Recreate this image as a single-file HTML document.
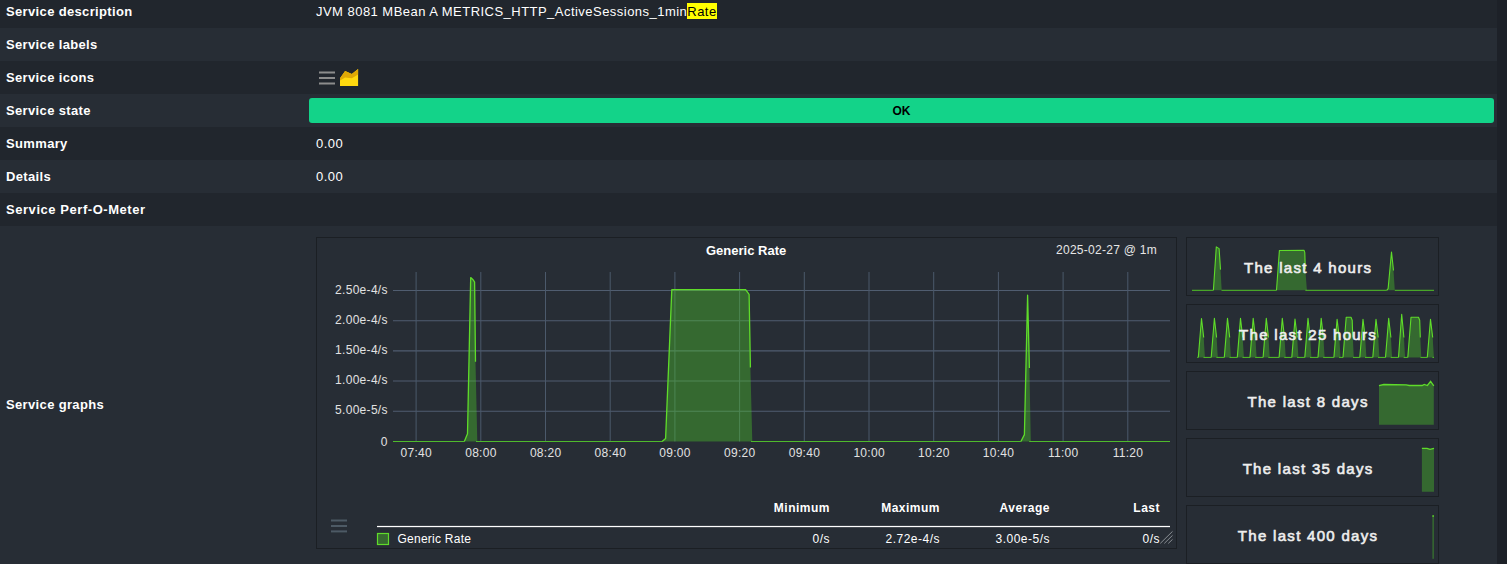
<!DOCTYPE html>
<html><head><meta charset="utf-8">
<style>
html,body{margin:0;padding:0;}
body{width:1507px;height:564px;overflow:hidden;background:#21262d;font-family:"Liberation Sans",sans-serif;color:#fff;position:relative;}
.row{position:absolute;left:0;width:1497px;height:33px;}
.d{background:#21262d;}
.l{background:#272d35;}
.k{position:absolute;left:6px;top:9px;font-weight:bold;font-size:13px;line-height:15px;letter-spacing:0.35px;white-space:nowrap;}
.v{position:absolute;left:316px;top:9px;font-size:13px;line-height:15px;letter-spacing:0.47px;white-space:nowrap;}
.sb{position:absolute;left:1497px;top:0;width:10px;height:564px;background:#1d2128;}
.box{position:absolute;border:1px solid #1b1f24;box-sizing:border-box;}
.t{position:absolute;white-space:nowrap;}
svg text{font-family:"Liberation Sans",sans-serif;}
.ax{font-size:12px;fill:#e2e2e2;letter-spacing:0.3px;}
.sg{position:absolute;font-size:15px;line-height:18px;letter-spacing:1.3px;-webkit-text-stroke:0.6px #eeeeee;color:#eeeeee;white-space:nowrap;transform:translateX(-50%);}
.lh{position:absolute;font-weight:bold;font-size:12px;line-height:14px;letter-spacing:0.5px;white-space:nowrap;text-align:right;}
.lv{position:absolute;font-size:12px;line-height:14px;letter-spacing:0.5px;white-space:nowrap;text-align:right;}
</style></head><body>
<div class="row d" style="top:-5px"><span class="k">Service description</span><span class="v">JVM 8081 MBean A METRICS_HTTP_ActiveSessions_1min<span style="background:#ffff00;color:#000;padding:1px 0 0 0">Rate</span></span></div>
<div class="row l" style="top:28px"><span class="k">Service labels</span></div>
<div class="row d" style="top:61px"><span class="k">Service icons</span>
 <svg style="position:absolute;left:0;top:-61px" width="400" height="100">
  <rect x="319" y="71.5" width="16" height="2" fill="#8c8c8c"/>
  <rect x="319" y="77" width="16" height="2" fill="#8c8c8c"/>
  <rect x="319" y="82.5" width="16" height="2" fill="#8c8c8c"/>
  <polygon points="340,78.2 345.1,71 351.8,73.9 358.1,68.9 358.1,86 340,86" fill="#ffd90f"/>
  <polygon points="340,78.2 345.1,71 351.8,73.9 358.1,68.9 358.1,74.4 351.8,78.2 345.1,77.6 340,80.6" fill="#dfa806"/>
 </svg></div>
<div class="row l" style="top:94px"><span class="k">Service state</span>
 <div style="position:absolute;left:309px;top:4px;width:1185px;height:25px;background:#13d389;border-radius:3px;color:#000;font-weight:bold;font-size:12px;line-height:27px;text-align:center;">OK</div></div>
<div class="row d" style="top:127px"><span class="k">Summary</span><span class="v">0.00</span></div>
<div class="row l" style="top:160px"><span class="k">Details</span><span class="v">0.00</span></div>
<div class="row d" style="top:193px"><span class="k" style="letter-spacing:0.55px">Service Perf-O-Meter</span></div>
<div class="row l" style="top:226px;height:338px"><span class="k" style="top:171px">Service graphs</span></div>
<div class="sb"></div>
<div class="box" style="left:316px;top:237px;width:861px;height:312px"></div>
<div class="box" style="left:1186px;top:237px;width:253px;height:59px"></div>
<div class="box" style="left:1186px;top:304px;width:253px;height:59px"></div>
<div class="box" style="left:1186px;top:371px;width:253px;height:59px"></div>
<div class="box" style="left:1186px;top:438px;width:253px;height:59px"></div>
<div class="box" style="left:1186px;top:505px;width:253px;height:59px"></div>
<svg style="position:absolute;left:0;top:0" width="1507" height="564">
<line x1="393" y1="290.5" x2="1170" y2="290.5" stroke="#505d70" stroke-width="1.15"/>
<line x1="393" y1="320.7" x2="1170" y2="320.7" stroke="#505d70" stroke-width="1.15"/>
<line x1="393" y1="350.8" x2="1170" y2="350.8" stroke="#505d70" stroke-width="1.15"/>
<line x1="393" y1="381.0" x2="1170" y2="381.0" stroke="#505d70" stroke-width="1.15"/>
<line x1="393" y1="411.2" x2="1170" y2="411.2" stroke="#505d70" stroke-width="1.15"/>
<line x1="416.1" y1="272" x2="416.1" y2="441.5" stroke="#4b596b" stroke-width="1"/>
<line x1="480.8" y1="272" x2="480.8" y2="441.5" stroke="#4b596b" stroke-width="1"/>
<line x1="545.5" y1="272" x2="545.5" y2="441.5" stroke="#4b596b" stroke-width="1"/>
<line x1="610.2" y1="272" x2="610.2" y2="441.5" stroke="#4b596b" stroke-width="1"/>
<line x1="674.9" y1="272" x2="674.9" y2="441.5" stroke="#4b596b" stroke-width="1"/>
<line x1="739.6" y1="272" x2="739.6" y2="441.5" stroke="#4b596b" stroke-width="1"/>
<line x1="804.3" y1="272" x2="804.3" y2="441.5" stroke="#4b596b" stroke-width="1"/>
<line x1="869.0" y1="272" x2="869.0" y2="441.5" stroke="#4b596b" stroke-width="1"/>
<line x1="933.7" y1="272" x2="933.7" y2="441.5" stroke="#4b596b" stroke-width="1"/>
<line x1="998.4" y1="272" x2="998.4" y2="441.5" stroke="#4b596b" stroke-width="1"/>
<line x1="1063.1" y1="272" x2="1063.1" y2="441.5" stroke="#4b596b" stroke-width="1"/>
<line x1="1127.8" y1="272" x2="1127.8" y2="441.5" stroke="#4b596b" stroke-width="1"/>
<text x="387.5" y="293.7" text-anchor="end" class="ax" dx="0.3">2.50e-4/s</text>
<text x="387.5" y="323.9" text-anchor="end" class="ax" dx="0.3">2.00e-4/s</text>
<text x="387.5" y="354.0" text-anchor="end" class="ax" dx="0.3">1.50e-4/s</text>
<text x="387.5" y="384.2" text-anchor="end" class="ax" dx="0.3">1.00e-4/s</text>
<text x="387.5" y="414.4" text-anchor="end" class="ax" dx="0.3">5.00e-5/s</text>
<text x="387.5" y="445.9" text-anchor="end" class="ax" dx="0.3">0</text>
<text x="416.1" y="456.8" text-anchor="middle" class="ax" dx="0.15">07:40</text>
<text x="480.8" y="456.8" text-anchor="middle" class="ax" dx="0.15">08:00</text>
<text x="545.5" y="456.8" text-anchor="middle" class="ax" dx="0.15">08:20</text>
<text x="610.2" y="456.8" text-anchor="middle" class="ax" dx="0.15">08:40</text>
<text x="674.9" y="456.8" text-anchor="middle" class="ax" dx="0.15">09:00</text>
<text x="739.6" y="456.8" text-anchor="middle" class="ax" dx="0.15">09:20</text>
<text x="804.3" y="456.8" text-anchor="middle" class="ax" dx="0.15">09:40</text>
<text x="869.0" y="456.8" text-anchor="middle" class="ax" dx="0.15">10:00</text>
<text x="933.7" y="456.8" text-anchor="middle" class="ax" dx="0.15">10:20</text>
<text x="998.4" y="456.8" text-anchor="middle" class="ax" dx="0.15">10:40</text>
<text x="1063.1" y="456.8" text-anchor="middle" class="ax" dx="0.15">11:00</text>
<text x="1127.8" y="456.8" text-anchor="middle" class="ax" dx="0.15">11:20</text>
<line x1="393" y1="441.5" x2="464.3" y2="441.5" stroke="#4fba2c" stroke-width="1.1"/>
<line x1="476" y1="441.5" x2="662.1" y2="441.5" stroke="#4fba2c" stroke-width="1.1"/>
<line x1="751" y1="441.5" x2="1020.9" y2="441.5" stroke="#4fba2c" stroke-width="1.1"/>
<line x1="1029.2" y1="441.5" x2="1170" y2="441.5" stroke="#4fba2c" stroke-width="1.1"/>
<polygon points="464.3,441.5 467.5,433.8 470.7,277.6 473.3,280.0 474.6,282.2 475.5,361.7 477.3,441.5" fill="rgba(80,210,40,0.37)"/>
<polyline points="464.3,441.5 467.5,433.8 470.7,277.6 473.3,280.0 474.6,282.2 475.5,361.7" fill="none" stroke="#5fdc2a" stroke-width="1.3" stroke-linejoin="round"/>
<polygon points="662.1,441.5 665.6,438.4 671.8,289.6 745.6,289.6 749.1,294.4 750.4,367.6 752.3,441.5" fill="rgba(80,210,40,0.37)"/>
<polyline points="662.1,441.5 665.6,438.4 671.8,289.6 745.6,289.6 749.1,294.4 750.4,367.6" fill="none" stroke="#5fdc2a" stroke-width="1.3" stroke-linejoin="round"/>
<polygon points="1020.9,441.5 1024.4,434.6 1027.6,295.2 1029.4,368.0 1030.8,441.5" fill="rgba(80,210,40,0.37)"/>
<polyline points="1020.9,441.5 1024.4,434.6 1027.6,295.2 1029.4,368.0" fill="none" stroke="#5fdc2a" stroke-width="1.3" stroke-linejoin="round"/>
<rect x="377" y="525.9" width="793" height="1.25" fill="#ffffff"/>
<rect x="377.5" y="533.5" width="11" height="11" fill="#376a30" stroke="#5fdc2a" stroke-width="1.2"/>
<rect x="331" y="519.5" width="16" height="2" fill="#4d5a65"/>
<rect x="331" y="525" width="16" height="2" fill="#4d5a65"/>
<rect x="331" y="530.4" width="16" height="2" fill="#4d5a65"/>
<line x1="1160.3" y1="543.4" x2="1172.5" y2="531.4" stroke="#8a8f94" stroke-width="1"/>
<line x1="1164.3" y1="543.4" x2="1172.5" y2="535.4" stroke="#8a8f94" stroke-width="1"/>
<line x1="1168.3" y1="543.4" x2="1172.5" y2="539.4" stroke="#8a8f94" stroke-width="1"/>
<line x1="1192" y1="290.3" x2="1213.4" y2="290.3" stroke="#52c426" stroke-width="1"/>
<line x1="1221.5" y1="290.3" x2="1276.5" y2="290.3" stroke="#52c426" stroke-width="1"/>
<line x1="1305.4" y1="290.3" x2="1386.7" y2="290.3" stroke="#52c426" stroke-width="1"/>
<line x1="1394.8" y1="290.3" x2="1434" y2="290.3" stroke="#52c426" stroke-width="1"/>
<polygon points="1213.4,290.3 1216.3,246.9 1219.1,248.6 1220.5,269.6 1221.7,290.3" fill="rgba(80,210,40,0.37)"/>
<polyline points="1213.4,290.3 1216.3,246.9 1219.1,248.6 1220.5,269.6" fill="none" stroke="#5fdc2a" stroke-width="1.1" stroke-linejoin="round"/>
<polygon points="1276.5,290.3 1279.4,250.5 1304.0,250.2 1304.8,252.7 1305.3,269.2 1306.9,290.3" fill="rgba(80,210,40,0.37)"/>
<polyline points="1276.5,290.3 1279.4,250.5 1304.0,250.2 1304.8,252.7 1305.3,269.2" fill="none" stroke="#5fdc2a" stroke-width="1.1" stroke-linejoin="round"/>
<polygon points="1386.7,290.3 1388.1,288.7 1391.5,252.0 1393.5,270.5 1394.8,290.3" fill="rgba(80,210,40,0.37)"/>
<polyline points="1386.7,290.3 1388.1,288.7 1391.5,252.0 1393.5,270.5" fill="none" stroke="#5fdc2a" stroke-width="1.1" stroke-linejoin="round"/>
<line x1="1197.2" y1="357.4" x2="1198.3" y2="357.4" stroke="#52c426" stroke-width="1"/>
<polygon points="1198.3,357.4 1201.5,318.5 1203.7,337.5 1204.9,357.4" fill="rgba(80,210,40,0.37)"/>
<polyline points="1198.3,357.4 1201.5,318.5 1203.7,337.5" fill="none" stroke="#5fdc2a" stroke-width="1.1" stroke-linejoin="round"/>
<line x1="1203.5" y1="357.4" x2="1211.2" y2="357.4" stroke="#52c426" stroke-width="1"/>
<polygon points="1211.2,357.4 1214.4,318.2 1216.6,337.5 1217.8,357.4" fill="rgba(80,210,40,0.37)"/>
<polyline points="1211.2,357.4 1214.4,318.2 1216.6,337.5" fill="none" stroke="#5fdc2a" stroke-width="1.1" stroke-linejoin="round"/>
<line x1="1216.4" y1="357.4" x2="1224.3" y2="357.4" stroke="#52c426" stroke-width="1"/>
<polygon points="1224.3,357.4 1227.5,318.4 1229.7,337.5 1230.9,357.4" fill="rgba(80,210,40,0.37)"/>
<polyline points="1224.3,357.4 1227.5,318.4 1229.7,337.5" fill="none" stroke="#5fdc2a" stroke-width="1.1" stroke-linejoin="round"/>
<line x1="1229.5" y1="357.4" x2="1237.3" y2="357.4" stroke="#52c426" stroke-width="1"/>
<polygon points="1237.3,357.4 1240.5,318.4 1242.7,337.5 1243.9,357.4" fill="rgba(80,210,40,0.37)"/>
<polyline points="1237.3,357.4 1240.5,318.4 1242.7,337.5" fill="none" stroke="#5fdc2a" stroke-width="1.1" stroke-linejoin="round"/>
<line x1="1242.5" y1="357.4" x2="1250.0" y2="357.4" stroke="#52c426" stroke-width="1"/>
<polygon points="1250.0,357.4 1253.2,318.4 1255.4,337.5 1256.6,357.4" fill="rgba(80,210,40,0.37)"/>
<polyline points="1250.0,357.4 1253.2,318.4 1255.4,337.5" fill="none" stroke="#5fdc2a" stroke-width="1.1" stroke-linejoin="round"/>
<line x1="1255.2" y1="357.4" x2="1263.1" y2="357.4" stroke="#52c426" stroke-width="1"/>
<polygon points="1263.1,357.4 1266.3,318.4 1268.5,337.5 1269.7,357.4" fill="rgba(80,210,40,0.37)"/>
<polyline points="1263.1,357.4 1266.3,318.4 1268.5,337.5" fill="none" stroke="#5fdc2a" stroke-width="1.1" stroke-linejoin="round"/>
<line x1="1268.3" y1="357.4" x2="1279.1" y2="357.4" stroke="#52c426" stroke-width="1"/>
<polygon points="1279.1,357.4 1282.3,318.4 1284.5,337.5 1285.7,357.4" fill="rgba(80,210,40,0.37)"/>
<polyline points="1279.1,357.4 1282.3,318.4 1284.5,337.5" fill="none" stroke="#5fdc2a" stroke-width="1.1" stroke-linejoin="round"/>
<line x1="1284.3" y1="357.4" x2="1291.8" y2="357.4" stroke="#52c426" stroke-width="1"/>
<polygon points="1291.8,357.4 1295.0,319.0 1297.2,337.5 1298.4,357.4" fill="rgba(80,210,40,0.37)"/>
<polyline points="1291.8,357.4 1295.0,319.0 1297.2,337.5" fill="none" stroke="#5fdc2a" stroke-width="1.1" stroke-linejoin="round"/>
<line x1="1297.0" y1="357.4" x2="1304.8" y2="357.4" stroke="#52c426" stroke-width="1"/>
<polygon points="1304.8,357.4 1308.0,318.4 1310.2,337.5 1311.4,357.4" fill="rgba(80,210,40,0.37)"/>
<polyline points="1304.8,357.4 1308.0,318.4 1310.2,337.5" fill="none" stroke="#5fdc2a" stroke-width="1.1" stroke-linejoin="round"/>
<line x1="1310.0" y1="357.4" x2="1318.0" y2="357.4" stroke="#52c426" stroke-width="1"/>
<polygon points="1318.0,357.4 1321.2,318.4 1323.4,337.5 1324.6,357.4" fill="rgba(80,210,40,0.37)"/>
<polyline points="1318.0,357.4 1321.2,318.4 1323.4,337.5" fill="none" stroke="#5fdc2a" stroke-width="1.1" stroke-linejoin="round"/>
<line x1="1323.2" y1="357.4" x2="1333.9" y2="357.4" stroke="#52c426" stroke-width="1"/>
<polygon points="1333.9,357.4 1337.1,319.4 1339.3,337.5 1340.5,357.4" fill="rgba(80,210,40,0.37)"/>
<polyline points="1333.9,357.4 1337.1,319.4 1339.3,337.5" fill="none" stroke="#5fdc2a" stroke-width="1.1" stroke-linejoin="round"/>
<line x1="1339.1" y1="357.4" x2="1343.0" y2="357.4" stroke="#52c426" stroke-width="1"/>
<polygon points="1343.0,357.4 1346.2,317.3 1351.0,317.3 1352.2,320.3 1352.8,337.5 1353.8,357.4" fill="rgba(80,210,40,0.37)"/>
<polyline points="1343.0,357.4 1346.2,317.3 1351.0,317.3 1352.2,320.3 1352.8,337.5" fill="none" stroke="#5fdc2a" stroke-width="1.1" stroke-linejoin="round"/>
<line x1="1353" y1="357.4" x2="1359.8" y2="357.4" stroke="#52c426" stroke-width="1"/>
<polygon points="1359.8,357.4 1363.0,319.4 1365.2,337.5 1366.4,357.4" fill="rgba(80,210,40,0.37)"/>
<polyline points="1359.8,357.4 1363.0,319.4 1365.2,337.5" fill="none" stroke="#5fdc2a" stroke-width="1.1" stroke-linejoin="round"/>
<line x1="1365" y1="357.4" x2="1372.8" y2="357.4" stroke="#52c426" stroke-width="1"/>
<polygon points="1372.8,357.4 1376.0,319.4 1378.2,337.5 1379.4,357.4" fill="rgba(80,210,40,0.37)"/>
<polyline points="1372.8,357.4 1376.0,319.4 1378.2,337.5" fill="none" stroke="#5fdc2a" stroke-width="1.1" stroke-linejoin="round"/>
<line x1="1378" y1="357.4" x2="1385.5" y2="357.4" stroke="#52c426" stroke-width="1"/>
<polygon points="1385.5,357.4 1388.7,318.4 1390.9,337.5 1392.1,357.4" fill="rgba(80,210,40,0.37)"/>
<polyline points="1385.5,357.4 1388.7,318.4 1390.9,337.5" fill="none" stroke="#5fdc2a" stroke-width="1.1" stroke-linejoin="round"/>
<line x1="1390.7" y1="357.4" x2="1398.5" y2="357.4" stroke="#52c426" stroke-width="1"/>
<polygon points="1398.5,357.4 1401.7,314.3 1403.9,337.5 1405.1,357.4" fill="rgba(80,210,40,0.37)"/>
<polyline points="1398.5,357.4 1401.7,314.3 1403.9,337.5" fill="none" stroke="#5fdc2a" stroke-width="1.1" stroke-linejoin="round"/>
<line x1="1403.7" y1="357.4" x2="1407.8" y2="357.4" stroke="#52c426" stroke-width="1"/>
<polygon points="1407.8,357.4 1411.0,317.3 1418.5,317.3 1419.7,320.3 1420.3,337.5 1421.3,357.4" fill="rgba(80,210,40,0.37)"/>
<polyline points="1407.8,357.4 1411.0,317.3 1418.5,317.3 1419.7,320.3 1420.3,337.5" fill="none" stroke="#5fdc2a" stroke-width="1.1" stroke-linejoin="round"/>
<line x1="1420.5" y1="357.4" x2="1427.3" y2="357.4" stroke="#52c426" stroke-width="1"/>
<polygon points="1427.3,357.4 1430.5,319.4 1432.7,337.5 1433.9,357.4" fill="rgba(80,210,40,0.37)"/>
<polyline points="1427.3,357.4 1430.5,319.4 1432.7,337.5" fill="none" stroke="#5fdc2a" stroke-width="1.1" stroke-linejoin="round"/>
<line x1="1432.5" y1="357.4" x2="1434" y2="357.4" stroke="#52c426" stroke-width="1"/>
<polygon points="1379.0,424.8 1379.0,385.6 1383.8,384.5 1406.2,384.8 1409.3,385.5 1422.1,385.5 1424.2,384.5 1427.4,385.5 1430.6,381.4 1433.8,385.8 1433.8,424.8" fill="rgba(80,210,40,0.37)"/>
<polyline points="1379.0,385.6 1383.8,384.5 1406.2,384.8 1409.3,385.5 1422.1,385.5 1424.2,384.5 1427.4,385.5 1430.6,381.4 1433.8,385.8" fill="none" stroke="#5fdc2a" stroke-width="1.3"/>
<polygon points="1421.9,491.8 1421.9,448.3 1427.0,448.3 1430.0,449.4 1434.0,448.3 1434.0,491.8" fill="rgba(80,210,40,0.37)"/>
<polyline points="1421.9,448.3 1427.0,448.3 1430.0,449.4 1434.0,448.3" fill="none" stroke="#5fdc2a" stroke-width="1.3"/>
<rect x="1432.4" y="515.3" width="1.5" height="43.5" fill="rgba(80,210,40,0.37)"/>
<rect x="1432.4" y="515.3" width="1.5" height="1.5" fill="#5fdc2a"/>
</svg>
<div class="t" style="left:706px;top:243px;font-weight:bold;font-size:13px;line-height:15px;">Generic Rate</div>
<div class="t" style="left:1056px;top:243px;font-size:12px;line-height:15px;letter-spacing:0.27px;color:#e6e6e6">2025-02-27 @ 1m</div>
<div class="lh" style="right:677px;top:501px">Minimum</div>
<div class="lh" style="right:567px;top:501px">Maximum</div>
<div class="lh" style="right:457px;top:501px">Average</div>
<div class="lh" style="right:347px;top:501px">Last</div>
<div class="t" style="left:397.5px;top:532px;font-size:12px;line-height:14px;letter-spacing:0.25px">Generic Rate</div>
<div class="lv" style="right:677px;top:531.5px">0/s</div>
<div class="lv" style="right:567px;top:531.5px">2.72e-4/s</div>
<div class="lv" style="right:457px;top:531.5px">3.00e-5/s</div>
<div class="lv" style="right:347px;top:531.5px">0/s</div>
<div class="sg" style="left:1308.1px;top:259px">The last 4 hours</div>
<div class="sg" style="left:1308.1px;top:326px">The last 25 hours</div>
<div class="sg" style="left:1308.1px;top:393px">The last 8 days</div>
<div class="sg" style="left:1308.1px;top:460px">The last 35 days</div>
<div class="sg" style="left:1308.1px;top:527px">The last 400 days</div>
</body></html>
